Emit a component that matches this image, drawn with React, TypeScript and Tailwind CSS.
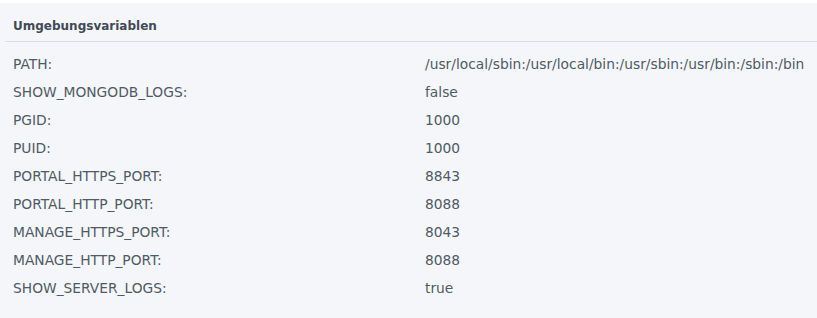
const envVars: [string, string][] = [
  ['PATH', '/usr/local/sbin:/usr/local/bin:/usr/sbin:/usr/bin:/sbin:/bin'],
  ['SHOW_MONGODB_LOGS', 'false'],
  ['PGID', '1000'],
  ['PUID', '1000'],
  ['PORTAL_HTTPS_PORT', '8843'],
  ['PORTAL_HTTP_PORT', '8088'],
  ['MANAGE_HTTPS_PORT', '8043'],
  ['MANAGE_HTTP_PORT', '8088'],
  ['SHOW_SERVER_LOGS', 'true'],
];

export default function App() {
  return (
    <div className="w-[817px] h-[318px] bg-white pt-[3px] font-['DejaVu_Sans',sans-serif]">
      <div className="h-[315px] bg-[#f4f6f9] pl-[5px]">
        <div className="h-[39px] pt-[15px] pl-2 leading-[16px] border-b border-[#d9dee4] text-[12px] font-bold text-[#414b55]">
          Umgebungsvariablen
        </div>
        <div className="pt-[8px] pl-2 text-[13.8px] text-[#505a64]">
          {envVars.map(([key, value]) => (
            <div key={key} className="flex h-[28px] items-center">
              <div className="w-[412px] shrink-0">{key}:</div>
              <div>{value}</div>
            </div>
          ))}
        </div>
      </div>
    </div>
  );
}
